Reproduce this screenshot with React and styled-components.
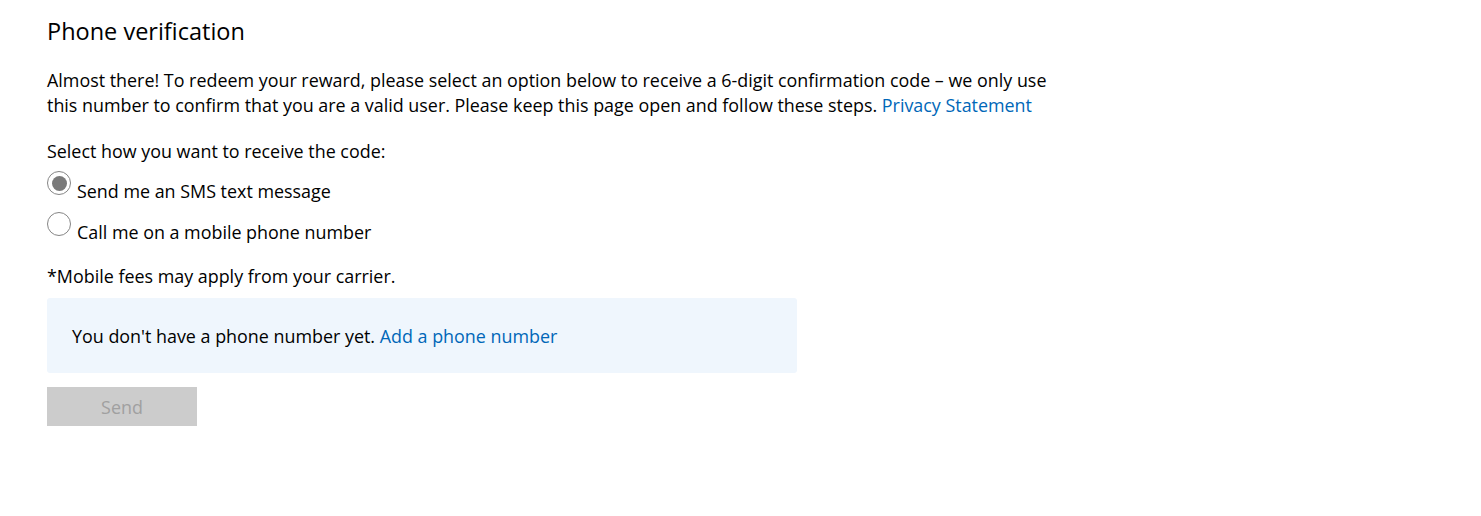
import React, { useState } from "react";
import styled, { createGlobalStyle } from "styled-components";

const GlobalStyle = createGlobalStyle`
	html, body {
		margin: 0;
		padding: 0;
		background: #ffffff;
	}
	body {
		font-family: "Open Sans", "Noto Sans", "Liberation Sans", sans-serif;
		color: #000000;
	}
`;

const options = [
	{ id: "sms", label: "Send me an SMS text message" },
	{ id: "call", label: "Call me on a mobile phone number" },
];

const App = () => {
	const [method, setMethod] = useState("sms");

	return (
		<>
			<GlobalStyle />
			<Page>
				<Title>Phone verification</Title>
				<Intro>
					Almost there! To redeem your reward, please select an option below to receive a
					6-digit confirmation code – we only use
					<br />
					this number to confirm that you are a valid user. Please keep this page open and
					follow these steps. <Link href="#">Privacy Statement</Link>
				</Intro>
				<Label>Select how you want to receive the code:</Label>
				<Options>
					{options.map((option) => (
						<OptionRow key={option.id} onClick={() => setMethod(option.id)}>
							<Radio $checked={method === option.id} />
							<OptionText>{option.label}</OptionText>
						</OptionRow>
					))}
				</Options>
				<Note>*Mobile fees may apply from your carrier.</Note>
				<InfoBox>
					You don't have a phone number yet. <Link href="#">Add a phone number</Link>
				</InfoBox>
				<SendButton disabled>Send</SendButton>
			</Page>
		</>
	);
};

export default App;

const Page = styled.main`
	display: flex;
	flex-direction: column;
	align-items: flex-start;
	padding: 15px 0 40px 47px;
	font-size: 17.9px;
	line-height: 25px;
`;
const Title = styled.h1`
	margin: 0;
	font-size: 23.5px;
	font-weight: 400;
	line-height: 32px;
`;
const Intro = styled.p`
	margin: 21px 0 0;
	white-space: nowrap;
`;
const Link = styled.a`
	color: #0067b8;
	text-decoration: none;
`;
const Label = styled.div`
	margin-top: 21px;
`;
const Options = styled.div`
	display: flex;
	flex-direction: column;
	gap: 8px;
	margin-top: 7px;
`;
const OptionRow = styled.label`
	display: flex;
	align-items: flex-start;
	gap: 6px;
	cursor: pointer;
`;
const Radio = styled.span`
	position: relative;
	box-sizing: border-box;
	width: 24px;
	height: 24px;
	border: 1.5px solid #858585;
	border-radius: 50%;
	background: #ffffff;
	flex-shrink: 0;

	&::after {
		content: "";
		position: absolute;
		inset: 3.5px;
		border-radius: 50%;
		background: #7a7a7a;
		display: ${({ $checked }) => ($checked ? "block" : "none")};
	}
`;
const OptionText = styled.span`
	margin-top: 8px;
`;
const Note = styled.div`
	margin-top: 19px;
`;
const InfoBox = styled.div`
	box-sizing: border-box;
	display: flex;
	align-items: center;
	width: 750px;
	height: 75px;
	margin-top: 9px;
	padding: 1px 25px 0;
	background: #eff6fd;
	border-radius: 3px;
	white-space: pre;
`;
const SendButton = styled.button`
	width: 150px;
	height: 39px;
	margin-top: 14px;
	border: none;
	border-radius: 0;
	background: #cccccc;
	color: #a0a0a0;
	font-family: inherit;
	font-size: 17.9px;
	cursor: default;
`;
